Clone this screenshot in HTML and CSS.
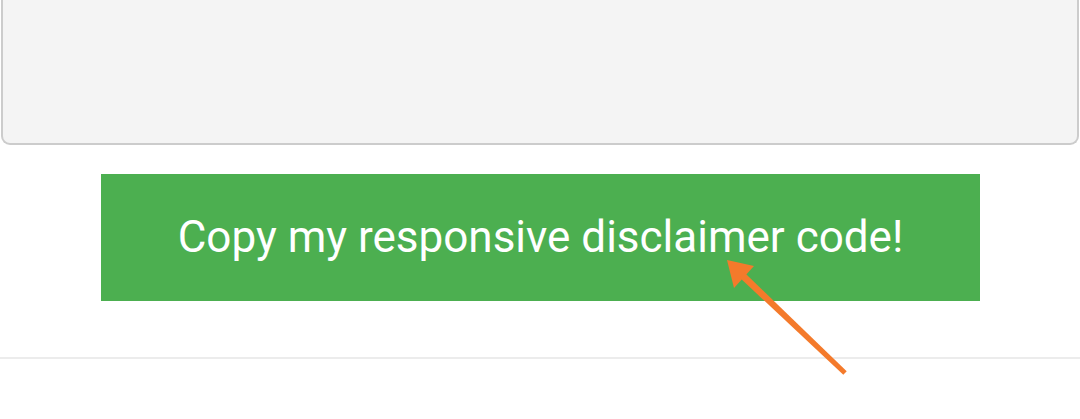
FILE: index.html
```html
<!DOCTYPE html>
<html>
<head>
<meta charset="utf-8">
<link rel="stylesheet" href="styles.css">
</head>
<body>
<div class="page">
  <div class="code-box"></div>
  <div class="btn-row">
    <button class="copy-btn">Copy my responsive disclaimer code!</button>
  </div>
  <hr class="divider">
  <svg class="arrow" width="1080" height="419" viewBox="0 0 1080 419">
    <polygon points="727,260 734,288 754,266" fill="#f47a2b"/>
    <polygon points="739.6,277.5 744.4,272.5 846.7,371.2 843.3,374.8" fill="#f47a2b"/>
  </svg>
</div>
</body>
</html>
```

FILE: styles.css
```css
html, body {
  margin: 0;
  padding: 0;
  background: #ffffff;
}
.page {
  position: relative;
  width: 1080px;
  height: 419px;
  overflow: hidden;
  font-family: Roboto, "Liberation Sans", sans-serif;
}
.code-box {
  margin: 0 1px;
  height: 145px;
  background: #f4f4f4;
  border: 2px solid #cccccc;
  border-top: none;
  border-radius: 0 0 9px 9px;
  box-sizing: border-box;
}
.btn-row {
  padding: 29px 100px 0 101px;
}
.copy-btn {
  display: block;
  width: 879px;
  height: 127px;
  border: none;
  background: #4caf50;
  color: #ffffff;
  font-family: Roboto, "Liberation Sans", sans-serif;
  font-size: 44px;
  padding: 0 0 2px 0;
  margin: 0;
}
.divider {
  margin: 56px 0 0 0;
  border: none;
  height: 2px;
  background: #ececec;
}
.arrow {
  position: absolute;
  left: 0;
  top: 0;
}
```
